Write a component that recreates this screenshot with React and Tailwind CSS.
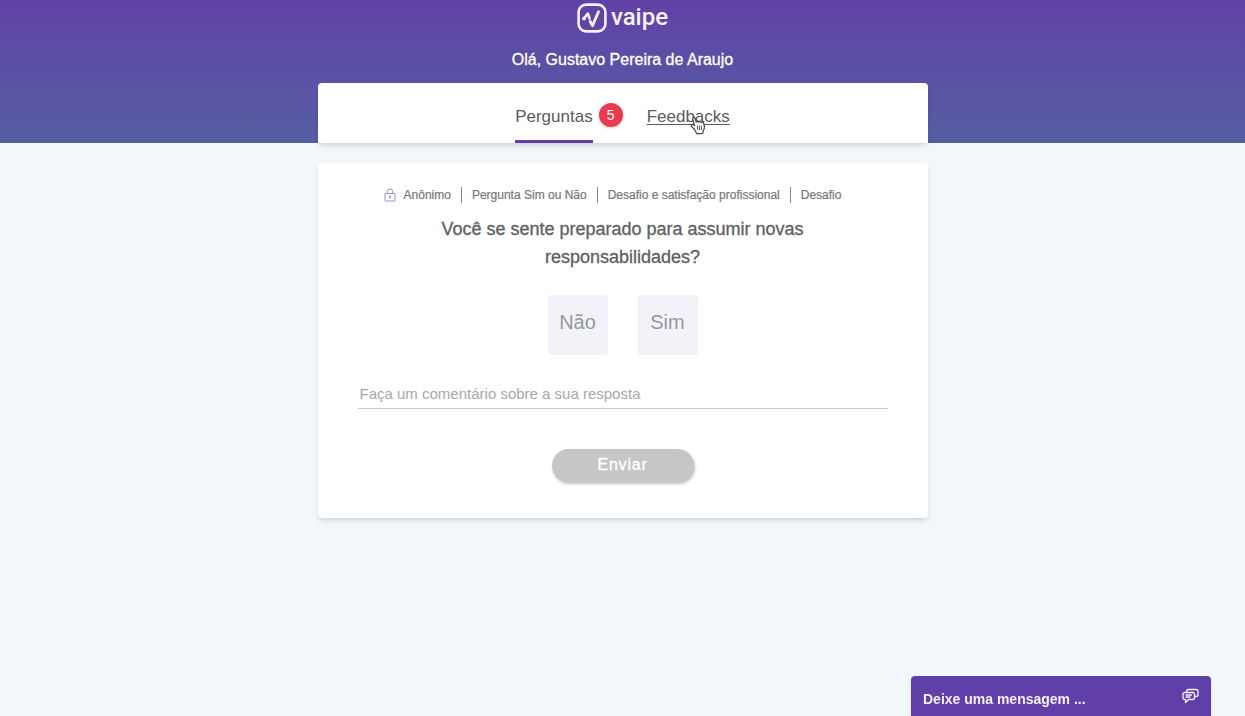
import { useState } from "react";

const TAGS = ["Anônimo", "Pergunta Sim ou Não", "Desafio e satisfação profissional", "Desafio"];

function Logo() {
  return (
    <a href="#inicio" aria-label="vaipe" className="flex h-9 items-center justify-center gap-1 text-[#f6f0ff]">
      <svg width="30" height="30" viewBox="0 0 30 30" fill="none" stroke="currentColor" strokeLinecap="round" strokeLinejoin="round" aria-hidden="true">
        <rect x="1.600" y="1.600" width="26.800" height="26.800" rx="7.500" strokeWidth="2.600" />
        <path d="M7 15.500 10.800 10.500l1.800 5" strokeWidth="2.600" />
        <path d="M13.200 18.500l2.300 4.200L21.500 8.800" strokeWidth="2.800" />
        <circle cx="7" cy="15.500" r="1.900" fill="currentColor" stroke="none" />
      </svg>
      <span className="pb-0.5 font-[Roboto,sans-serif] text-2xl leading-8 font-medium">vaipe</span>
    </a>
  );
}

function LockIcon() {
  return (
    <svg width="12" height="14" viewBox="0 0 12 14" fill="none" stroke="#9b8dd0" aria-hidden="true">
      <rect x="1" y="5.5" width="10" height="7.5" rx="0.5" />
      <path d="M3.2 5.5V3.800a2.800 2.800 0 0 1 5.600 0v1.700M6 8v3" />
      <circle cx="6" cy="8.6" r="1" fill="#9b8dd0" stroke="none" />
    </svg>
  );
}

function HandCursor() {
  return (
    <svg className="pointer-events-none absolute top-[33px] left-[43px]" width="16" height="19" viewBox="0 0 16 19" fill="#fff" stroke="#444" strokeWidth="1.2" strokeLinejoin="round" strokeLinecap="round" aria-hidden="true">
      <path d="M4.500 13.500 1.600 10.300C.6 9 2 7.800 3.200 8.700l1.300.9L2.800 3c-.4-1.800 1.700-2.200 2.200-.7l1.200 3.800c.3-1.200 2.100-1.200 2.500.1.400-1.100 2.100-.9 2.500.4.600-.9 2.200-.6 2.500.7l.7 3.200c.3 1.900-.3 3-1.200 4.100l-.4 2.700-5.900.5z" />
      <path d="M7.300 10l.3 3.600M9.300 10l.2 3.600M11.300 10l.1 3.600" strokeWidth="0.9" />
    </svg>
  );
}

function ChatIcon() {
  return (
    <svg width="17" height="16" viewBox="0 0 17 16" fill="none" stroke="currentColor" strokeWidth="1.3" strokeLinejoin="round" strokeLinecap="round" aria-hidden="true">
      <path d="M3 4.5h7.5q2 0 2 2v3q0 2-2 2h-4l-3 3v-3H3q-2 0-2-2v-3q0-2 2-2z" />
      <path d="M4.500 4.200V3.500q0-2 2-2H14q2 0 2 2v3q0 2-2 2h-1.300M4 7h5.500M4 9h4" />
    </svg>
  );
}

export default function App() {
  const [answer, setAnswer] = useState(null);
  const [comment, setComment] = useState("");

  return (
    <div className="min-h-screen bg-[#f4f7fa] font-['Liberation_Sans',Arial,sans-serif]">
      <header className="h-[143px] bg-linear-to-b from-[#6041a6] to-[#555fa3] text-center text-white">
        <Logo />
        <p className="pt-3 text-base leading-6 [-webkit-text-stroke:0.3px]">Olá, Gustavo Pereira de Araujo</p>
      </header>

      <main className="mx-auto -mt-[60px] max-w-[610px]">
        <nav className="flex h-[60px] justify-center rounded-t-sm bg-white text-[17px] text-[#5c5c5c] shadow-md">
          <a href="#perguntas" className="flex gap-1.5">
            <span className="flex items-center border-b-3 border-[#6040a5] pt-2.5">Perguntas</span>
            <span className="mt-5 flex size-6 items-center justify-center rounded-full bg-[#e93b50] text-sm text-white shadow-sm shadow-red-200">5</span>
          </a>
          <a href="#feedbacks" className="relative ml-6 flex items-center pt-2 underline underline-offset-2">
            Feedbacks
            <HandCursor />
          </a>
        </nav>

        <section className="mt-5 rounded-sm bg-white px-10 pt-6 pb-9 text-center shadow-md">
          <ul className="flex items-center justify-center pr-5 text-xs leading-4 text-[#777] [-webkit-text-stroke:0.2px]">
            {TAGS.map((tag, i) => (
              <li key={tag} className="flex items-center">
                {i === 0 && <span className="mr-2"><LockIcon /></span>}
                {i > 0 && <span className="mx-2.5 h-4 w-px bg-[#888]" />}
                {tag}
              </li>
            ))}
          </ul>

          <h1 className="mx-auto mt-3 max-w-[400px] text-lg leading-7 text-[#5c5f61] [-webkit-text-stroke:0.3px]">
            Você se sente preparado para assumir novas responsabilidades?
          </h1>

          <div className="mt-6 flex justify-center gap-[30px]">
            {["Não", "Sim"].map((option) => (
              <button
                key={option}
                type="button"
                aria-pressed={answer === option}
                onClick={() => setAnswer(option)}
                className="size-[60px] rounded-sm bg-[#f2f3f9] pb-1.5 text-xl text-[#98989d]"
              >
                {option}
              </button>
            ))}
          </div>

          <input
            type="text"
            aria-label="Comentário"
            value={comment}
            onChange={(e) => setComment(e.target.value)}
            placeholder="Faça um comentário sobre a sua resposta"
            className="mt-6 h-[30px] w-full border-b border-[#ccc] px-0.5 text-[15px] outline-none placeholder:text-[#a8a8a8]"
          />

          <button type="submit" className="mt-10 h-[33px] w-[142px] rounded-full bg-[#c6c6c6] pb-0.5 text-base tracking-wider text-white shadow-[1px_2px_3px_rgba(0,0,0,0.25)] [-webkit-text-stroke:0.3px]">
            Enviar
          </button>
        </section>
      </main>

      <button type="button" className="fixed right-[34px] bottom-0 flex h-10 w-[300px] items-center justify-between rounded-t-sm bg-[#603fa8] px-3 text-sm font-bold text-[#f6f0ff] shadow-md">
        <span className="pt-1.5">Deixe uma mensagem ...</span>
        <ChatIcon />
      </button>
    </div>
  );
}
